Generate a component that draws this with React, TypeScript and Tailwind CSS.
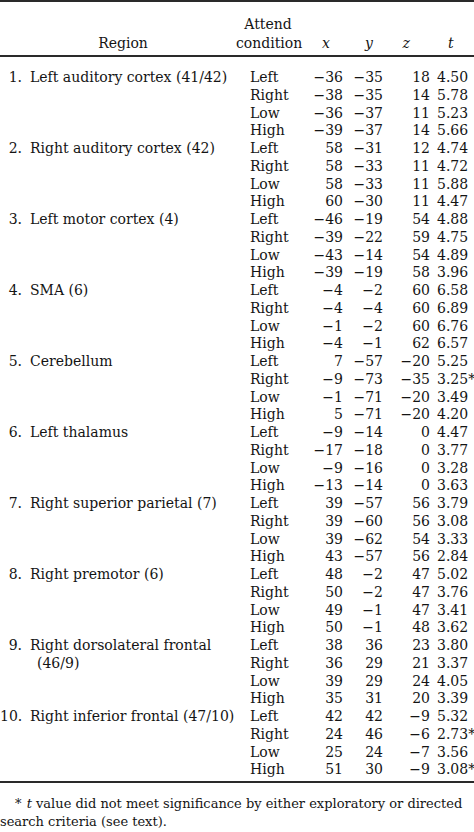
type Row = [string, string, string, string, string];

interface Group {
  num: string;
  name: string[];
  rows: Row[];
}

const groups: Group[] = [
  {
    num: "1.",
    name: ["Left auditory cortex (41/42)"],
    rows: [
      ["Left", "−36", "−35", "18", "4.50"],
      ["Right", "−38", "−35", "14", "5.78"],
      ["Low", "−36", "−37", "11", "5.23"],
      ["High", "−39", "−37", "14", "5.66"],
    ],
  },
  {
    num: "2.",
    name: ["Right auditory cortex (42)"],
    rows: [
      ["Left", "58", "−31", "12", "4.74"],
      ["Right", "58", "−33", "11", "4.72"],
      ["Low", "58", "−33", "11", "5.88"],
      ["High", "60", "−30", "11", "4.47"],
    ],
  },
  {
    num: "3.",
    name: ["Left motor cortex (4)"],
    rows: [
      ["Left", "−46", "−19", "54", "4.88"],
      ["Right", "−39", "−22", "59", "4.75"],
      ["Low", "−43", "−14", "54", "4.89"],
      ["High", "−39", "−19", "58", "3.96"],
    ],
  },
  {
    num: "4.",
    name: ["SMA (6)"],
    rows: [
      ["Left", "−4", "−2", "60", "6.58"],
      ["Right", "−4", "−4", "60", "6.89"],
      ["Low", "−1", "−2", "60", "6.76"],
      ["High", "−4", "−1", "62", "6.57"],
    ],
  },
  {
    num: "5.",
    name: ["Cerebellum"],
    rows: [
      ["Left", "7", "−57", "−20", "5.25"],
      ["Right", "−9", "−73", "−35", "3.25*"],
      ["Low", "−1", "−71", "−20", "3.49"],
      ["High", "5", "−71", "−20", "4.20"],
    ],
  },
  {
    num: "6.",
    name: ["Left thalamus"],
    rows: [
      ["Left", "−9", "−14", "0", "4.47"],
      ["Right", "−17", "−18", "0", "3.77"],
      ["Low", "−9", "−16", "0", "3.28"],
      ["High", "−13", "−14", "0", "3.63"],
    ],
  },
  {
    num: "7.",
    name: ["Right superior parietal (7)"],
    rows: [
      ["Left", "39", "−57", "56", "3.79"],
      ["Right", "39", "−60", "56", "3.08"],
      ["Low", "39", "−62", "54", "3.33"],
      ["High", "43", "−57", "56", "2.84"],
    ],
  },
  {
    num: "8.",
    name: ["Right premotor (6)"],
    rows: [
      ["Left", "48", "−2", "47", "5.02"],
      ["Right", "50", "−2", "47", "3.76"],
      ["Low", "49", "−1", "47", "3.41"],
      ["High", "50", "−1", "48", "3.62"],
    ],
  },
  {
    num: "9.",
    name: ["Right dorsolateral frontal", "(46/9)"],
    rows: [
      ["Left", "38", "36", "23", "3.80"],
      ["Right", "36", "29", "21", "3.37"],
      ["Low", "39", "29", "24", "4.05"],
      ["High", "35", "31", "20", "3.39"],
    ],
  },
  {
    num: "10.",
    name: ["Right inferior frontal (47/10)"],
    rows: [
      ["Left", "42", "42", "−9", "5.32"],
      ["Right", "24", "46", "−6", "2.73*"],
      ["Low", "25", "24", "−7", "3.56"],
      ["High", "51", "30", "−9", "3.08*"],
    ],
  },
];

const cols = "grid grid-cols-[22px_218px_60px_43px_40px_47px_44px]";

export default function App() {
  return (
    <div className="w-[474px] h-[832px] overflow-hidden bg-white font-['DejaVu_Serif',serif] text-[14px] text-[#141414]">
      <div className="h-[2px] bg-[#2a2a2a]" />

      {/* header */}
      <div className={`${cols} pt-[13px] pb-[2px] leading-[19px]`}>
        <div className="col-span-2 flex items-end justify-center pl-[6px]">Region</div>
        <div className="text-center -ml-[4px] whitespace-nowrap">
          Attend
          <br />
          condition
        </div>
        <div className="flex items-end justify-end pr-[13px] italic">x</div>
        <div className="flex items-end justify-end pr-[10px] italic">y</div>
        <div className="flex items-end justify-end pr-[20px] italic">z</div>
        <div className="flex items-end pl-[18px] italic">t</div>
      </div>
      <div className="h-[2px] bg-[#2a2a2a]" />

      {/* body */}
      <div className="pt-[12px] pb-[2px] leading-[17.75px]">
        {groups.map((g) =>
          g.rows.map((r, i) => (
            <div key={g.num + i} className={cols}>
              <div className="text-right whitespace-nowrap">{i === 0 ? g.num : ""}</div>
              <div className="pl-[8px] whitespace-nowrap">
                {i === 0 ? g.name[0] : i < g.name.length ? <span className="pl-[7px]">{g.name[i]}</span> : ""}
              </div>
              <div className="pl-[10px]">{r[0]}</div>
              <div className="text-right">{r[1]}</div>
              <div className="text-right">{r[2]}</div>
              <div className="text-right">{r[3]}</div>
              <div className="pl-[7px] whitespace-nowrap">{r[4]}</div>
            </div>
          ))
        )}
      </div>
      <div className="h-[2px] bg-[#2a2a2a]" />

      {/* footnote */}
      <p className="mt-[12px] leading-[18px] text-[13px] whitespace-nowrap">
        <span className="pl-[15px]">*</span> <i className="pl-[1px]">t</i> value did not meet significance by either exploratory or directed
        <br />
        search criteria (see text).
      </p>
    </div>
  );
}
